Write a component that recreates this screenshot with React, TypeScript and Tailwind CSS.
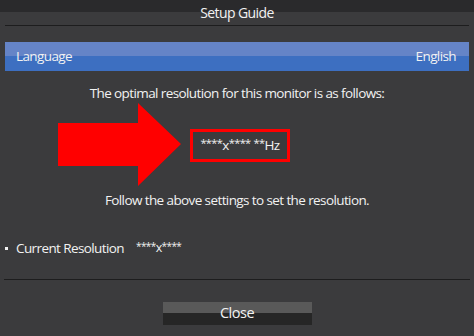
export default function App() {
  return (
    <div className="w-[474px] h-[336px] overflow-hidden bg-[#3b3b3d] flex flex-col font-['Open_Sans',sans-serif] text-[13.5px] tracking-[-0.6px] text-[#f2f2f2]">
      {/* Title */}
      <div className="h-[25px] bg-[linear-gradient(#2a2a2c_0_12px,#3b3b3d_12px)] flex items-center justify-center leading-none text-[14px]">
        Setup Guide
      </div>
      <div className="mx-[5px] h-px bg-[#1d1d1e]" />

      {/* Language row */}
      <div className="mt-[16px] mx-[5px] h-[29px] pl-[11px] pr-[13px] flex items-center justify-between bg-[linear-gradient(#6584c7_0_50%,#3d6fc1_50%)]">
        <span>Language</span>
        <span>English</span>
      </div>

      <p className="mt-[12px] h-[20px] leading-[20px] text-center">
        The optimal resolution for this monitor is as follows:
      </p>

      {/* Arrow + highlighted resolution */}
      <div className="grid grid-cols-[1fr_auto_1fr] items-center h-[83px] pl-[6px]">
        <div className="flex justify-end pr-[8px]">
          <svg width="124" height="83" viewBox="0 0 124 83">
            <polygon points="0,20 80,20 80,0 123,41 80,83 80,63 0,63" fill="#ff0000" />
          </svg>
        </div>
        <div className="w-[100px] h-[33px] mt-[2px] border-[3px] border-[#ff0000] flex items-center justify-center whitespace-nowrap">
          <span className="text-[11px] -translate-y-[2px]">****</span>x
          <span className="text-[11px] -translate-y-[2px]">****</span>
          <span className="text-[11px] -translate-y-[2px] ml-[3px]">**</span>Hz
        </div>
        <div />
      </div>

      <p className="mt-[4px] h-[20px] leading-[20px] text-center">
        Follow the above settings to set the resolution.
      </p>

      {/* Current resolution */}
      <div className="mt-[28px] h-[20px] flex items-center">
        <span className="ml-[5px] w-[3px] h-[3px] bg-[#f2f2f2]" />
        <span className="ml-[8px]">Current Resolution</span>
        <span className="ml-[12px] flex items-center text-[12.5px]">
          <span className="text-[10px] -translate-y-[2px]">****</span>x
          <span className="text-[10px] -translate-y-[2px]">****</span>
        </span>
      </div>

      <div className="mt-[21px] mx-[4px] h-px bg-[#1d1d1e]" />

      {/* Close */}
      <div className="mt-[22px] flex justify-center">
        <button className="w-[149px] h-[23px] bg-[linear-gradient(#595959_0_50%,#262626_50%)] text-[14.5px] leading-none tracking-[-0.5px] text-[#f2f2f2]">
          Close
        </button>
      </div>
    </div>
  );
}
